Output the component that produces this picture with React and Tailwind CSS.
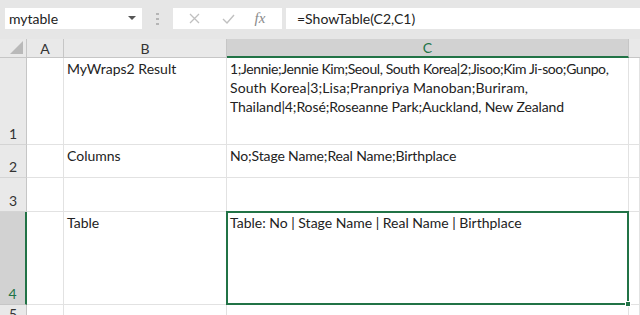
import React from "react";

const font = { fontFamily: "Lato, 'Open Sans', sans-serif" };

function Cell({ className = "", children }) {
  return (
    <div className={`border-r border-b border-[#e2e2e2] bg-white text-[14px] leading-[19px] text-[#222] pl-[3px] pt-[1px] overflow-hidden whitespace-nowrap ${className}`}>
      {children}
    </div>
  );
}

function RowHead({ n, selected }) {
  return (
    <div
      className={`flex items-end justify-center pb-[1px] text-[14px] leading-[18px] border-b ${
        selected
          ? "bg-[#d2d2d2] text-[#217346] border-r-2 border-r-[#217346] border-b-[#c6c6c6]"
          : "bg-[#e9e9e9] text-[#333] border-r border-r-[#c6c6c6] border-b-[#d4d4d4]"
      }`}
    >
      {n}
    </div>
  );
}

export default function App() {
  return (
    <div className="w-[640px] h-[315px] overflow-hidden bg-[#e6e6e6] relative" style={font}>
      {/* formula bar */}
      <div className="flex items-center h-[39px] pt-[8px] pb-[10px] pl-[5px]">
        <div className="w-[137px] h-[21px] bg-white flex items-center justify-between pl-[4px] pr-[6px] text-[14px] text-[#222]">
          <span>mytable</span>
          <svg width="8" height="5" viewBox="0 0 8 5"><path d="M0 0 L8 0 L4 4 Z" fill="#555" /></svg>
        </div>
        <div className="w-[31px] flex justify-center">
          <svg width="3" height="12" viewBox="0 0 3 12">
            <rect x="0" y="0" width="3" height="2" fill="#b5b5b5" />
            <rect x="0" y="5" width="3" height="2" fill="#b5b5b5" />
            <rect x="0" y="10" width="3" height="2" fill="#b5b5b5" />
          </svg>
        </div>
        <div className="w-[109px] h-[21px] bg-white flex items-center">
          <div className="w-[34px] flex justify-center ml-[4px]">
            <svg width="11" height="11" viewBox="0 0 11 11"><path d="M1 1 L10 10 M10 1 L1 10" stroke="#c0c0c0" strokeWidth="1.3" /></svg>
          </div>
          <div className="w-[34px] flex justify-center">
            <svg width="13" height="10" viewBox="0 0 13 10"><path d="M1 5 L5 9 L12 1" stroke="#c0c0c0" strokeWidth="1.4" fill="none" /></svg>
          </div>
          <div className="w-[30px] flex justify-center text-[15px] italic text-[#8a8a8a]" style={{ fontFamily: "'Liberation Serif', serif" }}>
            fx
          </div>
        </div>
        <div className="ml-[4px] flex-1 h-[21px] bg-white flex items-center pl-[11px] text-[14px] text-[#222]">
          =ShowTable(C2,C1)
        </div>
      </div>

      {/* grid */}
      <div className="grid grid-cols-[27px_37px_163px_402px_1fr] grid-rows-[19px_87px_33px_34px_93px_1fr] h-[276px] bg-white">
        {/* header row */}
        <div className="bg-[#e9e9e9] border-r border-b border-[#c6c6c6] relative">
          <svg className="absolute right-[3px] bottom-[3px]" width="13" height="13" viewBox="0 0 13 13"><path d="M13 0 L13 13 L0 13 Z" fill="#b9b9b9" /></svg>
        </div>
        <div className="bg-[#e9e9e9] border-r border-b border-[#c6c6c6] flex items-center justify-center text-[14px] text-[#333]">A</div>
        <div className="bg-[#e9e9e9] border-r border-b border-[#c6c6c6] flex items-center justify-center text-[14px] text-[#333]">B</div>
        <div className="bg-[#d2d2d2] border-r border-[#c6c6c6] border-b-2 border-b-[#217346] flex items-center justify-center text-[14px] text-[#217346]">C</div>
        <div className="bg-[#e9e9e9] border-b border-[#c6c6c6]"></div>

        {/* row 1 */}
        <RowHead n="1" />
        <Cell></Cell>
        <Cell>MyWraps2 Result</Cell>
        <Cell>
          <div className="tracking-[-0.4px]">1;Jennie;Jennie Kim;Seoul, South Korea|2;Jisoo;Kim Ji-soo;Gunpo,</div>
          <div className="tracking-[0.1px]">South Korea|3;Lisa;Pranpriya Manoban;Buriram,</div>
          <div className="tracking-[-0.1px]">Thailand|4;Rosé;Roseanne Park;Auckland, New Zealand</div>
        </Cell>
        <Cell></Cell>

        {/* row 2 */}
        <RowHead n="2" />
        <Cell></Cell>
        <Cell>Columns</Cell>
        <Cell className="tracking-[-0.15px]">No;Stage Name;Real Name;Birthplace</Cell>
        <Cell></Cell>

        {/* row 3 */}
        <RowHead n="3" />
        <Cell></Cell>
        <Cell></Cell>
        <Cell></Cell>
        <Cell></Cell>

        {/* row 4 */}
        <RowHead n="4" selected />
        <Cell></Cell>
        <Cell>Table</Cell>
        <div className="relative bg-white border-2 border-[#217346] -ml-[1px] -mt-[1px] text-[14px] leading-[19px] text-[#222] pl-[2px] whitespace-nowrap">
          Table: No | Stage Name | Real Name | Birthplace
          <div className="absolute -right-[4px] -bottom-[4px] w-[6px] h-[6px] bg-[#217346] border border-white"></div>
        </div>
        <Cell></Cell>

        {/* row 5 */}
        <RowHead n="5" />
        <Cell></Cell>
        <Cell></Cell>
        <Cell></Cell>
        <Cell></Cell>
      </div>
    </div>
  );
}
